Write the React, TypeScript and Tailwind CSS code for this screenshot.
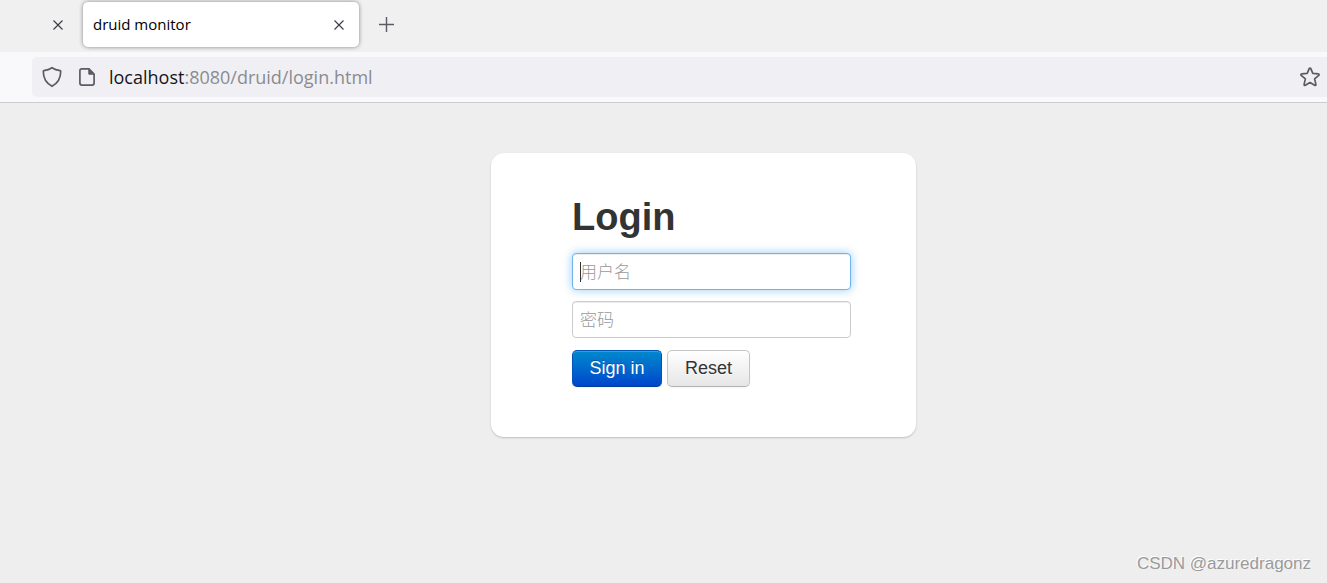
import { useState } from "react";

function CloseIcon() {
  return (
    <svg width="10" height="10" viewBox="0 0 10 10" fill="none" stroke="#3a3944" strokeWidth="1.1" aria-hidden="true">
      <path d="M0.5 0.5l9 9M9.5 0.5l-9 9" />
    </svg>
  );
}

function PlusIcon() {
  return (
    <svg width="15" height="15" viewBox="0 0 15 15" fill="none" stroke="#5b5b66" strokeWidth="1.4" aria-hidden="true">
      <path d="M7.5 0v15M0 7.5h15" />
    </svg>
  );
}

function ShieldIcon() {
  return (
    <svg width="20" height="22" viewBox="0 0 20 22" fill="none" stroke="#5b5b66" strokeWidth="1.7" strokeLinejoin="round" aria-hidden="true">
      <path d="M10 1.7C7.8 3.1 4.600 4.200 1.900 4.700C1.400 4.800 1.300 5.100 1.300 5.600C1.300 11.600 3.600 17 10 20.300C16.400 17 18.700 11.600 18.700 5.600C18.700 5.100 18.600 4.800 18.100 4.700C15.400 4.200 12.200 3.100 10 1.700Z" />
    </svg>
  );
}

function PageIcon() {
  return (
    <svg width="16" height="18" viewBox="0 0 16 18" fill="none" stroke="#5b5b66" strokeWidth="1.7" strokeLinejoin="round" aria-hidden="true">
      <path d="M10 0.9H2.9A2 2 0 0 0 0.9 2.9v12.2a2 2 0 0 0 2 2h10.200a2 2 0 0 0 2-2V6z" />
      <path d="M9.8 1v5.200h5.200z" fill="#5b5b66" strokeWidth="1" />
    </svg>
  );
}

function StarIcon() {
  return (
    <svg width="20" height="20" viewBox="0 0 20 20" fill="none" stroke="#5b5b66" strokeWidth="1.7" strokeLinejoin="round" aria-hidden="true">
      <path d="M9.3 1.4a.8.8 0 0 1 1.4 0l2.100 5 5.500.5a.8.8 0 0 1 .5 1.400l-4.200 3.600 1.300 5.500a.8.8 0 0 1-1.200.9L10 15.500l-4.700 2.800a.8.8 0 0 1-1.200-.9l1.300-5.500L1.200 8.300a.8.8 0 0 1 .5-1.400l5.500-.5z" />
    </svg>
  );
}

function TabBar() {
  return (
    <div className="flex h-[52px] items-start bg-[#f0f0f0] pt-0.5 font-['Open_Sans','Noto_Sans',sans-serif]">
      <button type="button" aria-label="Close previous tab" className="ml-[53px] flex h-[45px] items-center">
        <CloseIcon />
      </button>
      <div className="ml-5 flex h-[45px] w-[276px] items-center justify-between rounded-[5px] bg-white pr-[15px] pl-2.5 shadow-[0_0_4px_rgba(0,0,0,0.45)]">
        <span className="pb-0.5 text-[15px] leading-5 text-black">druid monitor</span>
        <button type="button" aria-label="Close tab">
          <CloseIcon />
        </button>
      </div>
      <button type="button" aria-label="New tab" className="ml-5 flex h-[45px] items-center">
        <PlusIcon />
      </button>
    </div>
  );
}

function AddressBar() {
  return (
    <div className="border-b border-[#cccccc] bg-[#f9f9fb] py-[5px] pl-8">
      <div className="flex h-10 items-center rounded-l-[5px] bg-[#f0f0f4] pr-[7px] pl-2.5 font-['Open_Sans','Noto_Sans',sans-serif]">
        <ShieldIcon />
        <span className="ml-[17px]">
          <PageIcon />
        </span>
        <p className="ml-3.5 flex-1 text-lg text-[#8b8b90]">
          <span className="text-[#15141a]">localhost</span>:8080/druid/login.html
        </p>
        <button type="button" aria-label="Bookmark this page">
          <StarIcon />
        </button>
      </div>
    </div>
  );
}

const inputBase =
  "block h-[37px] w-full rounded-[4px] border bg-white px-[7px] pb-0.5 text-[17px] font-light text-[#555555] outline-none placeholder:text-[#999999] font-['Noto_Sans_CJK_SC',sans-serif]";

const buttonBase =
  "h-[37px] rounded-[5px] border bg-linear-to-b pb-0.5 text-lg leading-6 shadow-[inset_0_1px_0_rgba(255,255,255,0.2),0_1px_2px_rgba(0,0,0,0.05)]";

function LoginForm() {
  const [username, setUsername] = useState("");
  const [password, setPassword] = useState("");

  const reset = () => {
    setUsername("");
    setPassword("");
  };

  return (
    <form
      onSubmit={(e) => e.preventDefault()}
      className="w-[425px] rounded-[13px] bg-white pt-10 pr-[65px] pb-[50px] pl-[81px] shadow-[0_1px_2px_rgba(0,0,0,0.2)]"
    >
      <h2 className="text-[38px] leading-[48px] font-bold text-[#333333]">Login</h2>
      <div className="relative mt-3">
        <input
          type="text"
          aria-label="用户名"
          placeholder="用户名"
          value={username}
          onChange={(e) => setUsername(e.target.value)}
          className={`${inputBase} border-[#6fb4ee] caret-transparent shadow-[inset_0_1px_1px_rgba(0,0,0,0.075),0_0_10px_rgba(82,168,236,0.6)]`}
        />
        {username === "" && <span className="absolute top-[9px] left-2 h-5 w-px bg-[#333333]" />}
      </div>
      <input
        type="password"
        aria-label="密码"
        placeholder="密码"
        value={password}
        onChange={(e) => setPassword(e.target.value)}
        className={`${inputBase} mt-[11px] border-[#cccccc] shadow-[inset_0_1px_1px_rgba(0,0,0,0.075)]`}
      />
      <div className="mt-3 flex gap-[5px]">
        <button
          type="submit"
          className={`${buttonBase} w-[90px] border-[#0055bb] border-b-[#003f99] from-[#0088cc] to-[#0044cc] text-white [text-shadow:0_-1px_0_rgba(0,0,0,0.25)]`}
        >
          Sign in
        </button>
        <button
          type="button"
          onClick={reset}
          className={`${buttonBase} w-[83px] border-[#c5c5c5] border-b-[#b3b3b3] from-white to-[#e6e6e6] text-[#333333] [text-shadow:0_1px_1px_rgba(255,255,255,0.75)]`}
        >
          Reset
        </button>
      </div>
    </form>
  );
}

export default function App() {
  return (
    <div className="flex min-h-screen flex-col bg-[#eeeeee] font-['Liberation_Sans',sans-serif]">
      <TabBar />
      <AddressBar />
      <main className="flex flex-1 items-start justify-center pt-[50px] pl-20">
        <LoginForm />
      </main>
      <footer className="pr-4 pb-[7px] text-right text-[17px] leading-6 text-[#9a9a9a] [text-shadow:-1px_-1px_0_#ffffff]">
        CSDN @azuredragonz
      </footer>
    </div>
  );
}
